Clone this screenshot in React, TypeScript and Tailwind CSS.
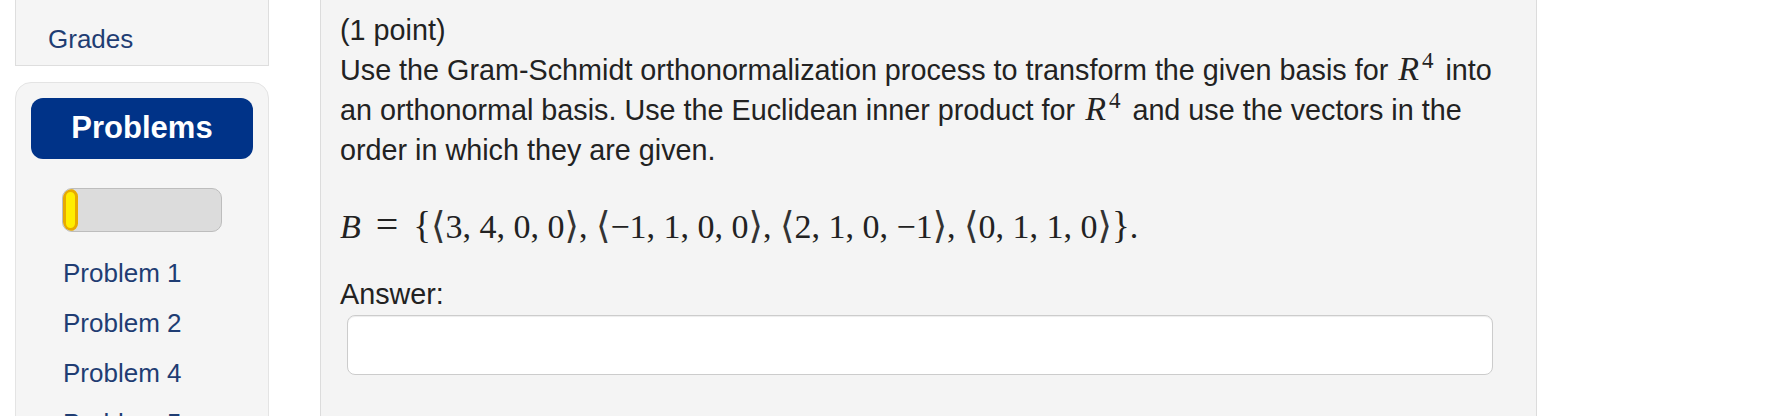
import React from 'react';

const problems = ['Problem 1', 'Problem 2', 'Problem 4', 'Problem 5'];

const mathFont = "font-['Liberation_Serif','DejaVu_Serif',serif]";

// R^4 as typeset inline in the statement
const R4 = () => (
  <span className="whitespace-nowrap ml-[2px] mr-[4px]">
    <span className={`${mathFont} italic text-[34px] leading-none`}>R</span>
    <span className={`${mathFont} relative top-[-12px] text-[23px] leading-none ml-[3px]`}>4</span>
  </span>
);

const Vector = ({ items }: { items: string[] }) => (
  <>
    <span className="text-[37px] font-['DejaVu_Serif',serif] font-light text-[#333]">⟨</span>
    {items.join(', ')}
    <span className="text-[37px] font-['DejaVu_Serif',serif] font-light text-[#333]">⟩</span>
  </>
);

export default function App() {
  return (
    <div className="h-[416px] overflow-hidden bg-white flex font-['Liberation_Sans',Arial,sans-serif]">
      {/* Sidebar */}
      <aside className="ml-[15px] w-[254px] shrink-0 flex flex-col">
        <div className="shrink-0 h-[66px] border-x border-b border-[#dedede] bg-[#f5f5f5] pl-[32px] pt-[24px] text-[26px] leading-[30px] text-[#1f3d73]">
          Grades
        </div>

        <div className="shrink-0 mt-[16px] h-[420px] rounded-t-[16px] border border-[#e4e4e4] bg-[#f5f5f5] px-[15px] pt-[15px]">
          <div className="h-[61px] rounded-[12px] bg-[#003388] text-white font-bold text-[31px] flex items-center justify-center">
            Problems
          </div>

          {/* progress */}
          <div className="mt-[29px] ml-[31px] w-[160px] h-[44px] rounded-[10px] border-[1.5px] border-[#bdbdbd] bg-[#dcdcdc] overflow-hidden flex">
            <div className="w-[15px] h-full rounded-full bg-[#ffee00] border-[3px] border-[#e8aa00]" />
          </div>

          <ul className="mt-[16px] pl-[32px]">
            {problems.map((p) => (
              <li key={p} className="h-[50px] leading-[50px] text-[26px] text-[#1f3d73]">
                {p}
              </li>
            ))}
          </ul>
        </div>
      </aside>

      {/* Problem body */}
      <main className="ml-[51px] w-[1217px] shrink-0 border-x border-[#dcdcdc] bg-[#f4f4f4] px-[19px] pt-[10px] text-[28.75px] leading-[40px] text-[#222]">
        <div>(1 point)</div>
        <p className="whitespace-nowrap">
          Use the Gram-Schmidt orthonormalization process to transform the given basis for <R4 /> into
          <br />
          an orthonormal basis. Use the Euclidean inner product for <R4 /> and use the vectors in the
          <br />
          order in which they are given.
        </p>

        <div className={`mt-[35px] ${mathFont} text-[34px] leading-[40px] whitespace-nowrap`}>
          <span className="italic">B</span>
          <span className="mx-[15px] text-[40px] leading-none">=</span>
          <span className="text-[37px]">{'{'}</span>
          <Vector items={['3', '4', '0', '0']} />,{' '}
          <Vector items={['−1', '1', '0', '0']} />,{' '}
          <Vector items={['2', '1', '0', '−1']} />,{' '}
          <Vector items={['0', '1', '1', '0']} />
          <span className="text-[37px]">{'}'}</span>.
        </div>

        <div className="mt-[27px]">Answer:</div>
        <input
          type="text"
          className="mt-[1px] ml-[7px] block w-[1146px] h-[60px] rounded-[8px] border-[1.5px] border-[#cccccc] bg-white shadow-[inset_0_1px_1px_rgba(0,0,0,0.075)] outline-none"
        />
      </main>
    </div>
  );
}
